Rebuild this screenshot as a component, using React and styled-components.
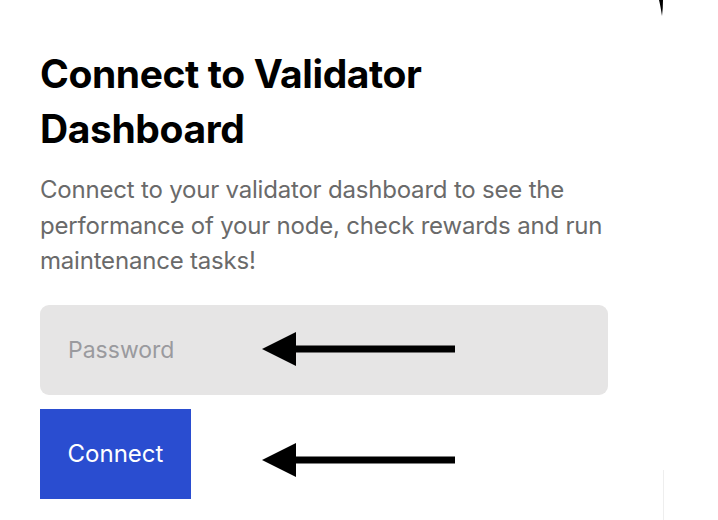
import React, { useState } from "react";
import styled, { createGlobalStyle } from "styled-components";

const Arrow = () => (
  <svg width="194" height="36" viewBox="0 0 194 36">
    <path d="M0 18 L34 1 L34 14.5 L193 14.5 L193 21.5 L34 21.5 L34 35 Z" fill="#000" />
  </svg>
);

const App = () => {
  const [password, setPassword] = useState("");

  return (
    <Page>
      <GlobalStyle />
      <FrameEdge width="12" height="16" viewBox="0 0 12 16">
        <path d="M0 0 L4 0 Q4 8 3 16 Q1.5 6 0 0 Z" fill="#000" />
      </FrameEdge>
      <Title>Connect to Validator Dashboard</Title>
      <Intro>
        Connect to your validator dashboard to see the performance of your
        node, check rewards and run maintenance tasks!
      </Intro>
      <Field>
        <Input
          type="password"
          value={password}
          onChange={(e) => setPassword(e.target.value)}
          placeholder="Password"
        />
        <Arrow />
      </Field>
      <ButtonRow>
        <Button>Connect</Button>
        <Arrow />
      </ButtonRow>
      <EdgeLine />
    </Page>
  );
};

export default App;

// style
const GlobalStyle = createGlobalStyle`
  body {
    margin: 0;
    background: #fff;
    font-family: Inter, "Liberation Sans", sans-serif;
  }
`;
const Page = styled.div`
  position: relative;
  width: 718px;
  height: 520px;
  overflow: hidden;
  padding: 46px 0 0 40px;
  box-sizing: border-box;
`;
const FrameEdge = styled.svg`
  position: absolute;
  top: 0;
  left: 659px;
`;
const EdgeLine = styled.div`
  position: absolute;
  left: 663px;
  top: 470px;
  width: 1px;
  height: 50px;
  background: #eee;
`;
const Title = styled.h1`
  margin: 0;
  width: 460px;
  font-size: 39px;
  font-weight: 700;
  line-height: 55px;
  letter-spacing: -0.4px;
  color: #000;
`;
const Intro = styled.p`
  margin: 16px 0 0;
  width: 600px;
  font-size: 24px;
  line-height: 35.5px;
  color: #6a6a6a;
  letter-spacing: -0.2px;
`;
const Field = styled.div`
  display: flex;
  align-items: center;
  margin-top: 26px;
  width: 568px;
  height: 90px;
  box-sizing: border-box;
  padding-left: 28px;
  border-radius: 9px;
  background: #e6e5e5;
  svg {
    margin-bottom: 2px;
  }
`;
const Input = styled.input`
  flex: 0 0 194px;
  width: 194px;
  height: 100%;
  padding: 0;
  border: none;
  background: transparent;
  font-family: Inter, "Liberation Sans", sans-serif;
  font-size: 23px;
  color: #333;
  outline: none;
  &::placeholder {
    color: #9a9a9e;
  }
`;
const ButtonRow = styled.div`
  display: flex;
  align-items: center;
  gap: 71px;
  margin-top: 14px;
  svg {
    margin-top: 12px;
  }
`;
const Button = styled.button`
  width: 151px;
  height: 90px;
  padding: 0;
  border: none;
  background: #2a4dd0;
  color: #fff;
  font-family: Inter, "Liberation Sans", sans-serif;
  font-size: 24px;
  cursor: pointer;
`;
